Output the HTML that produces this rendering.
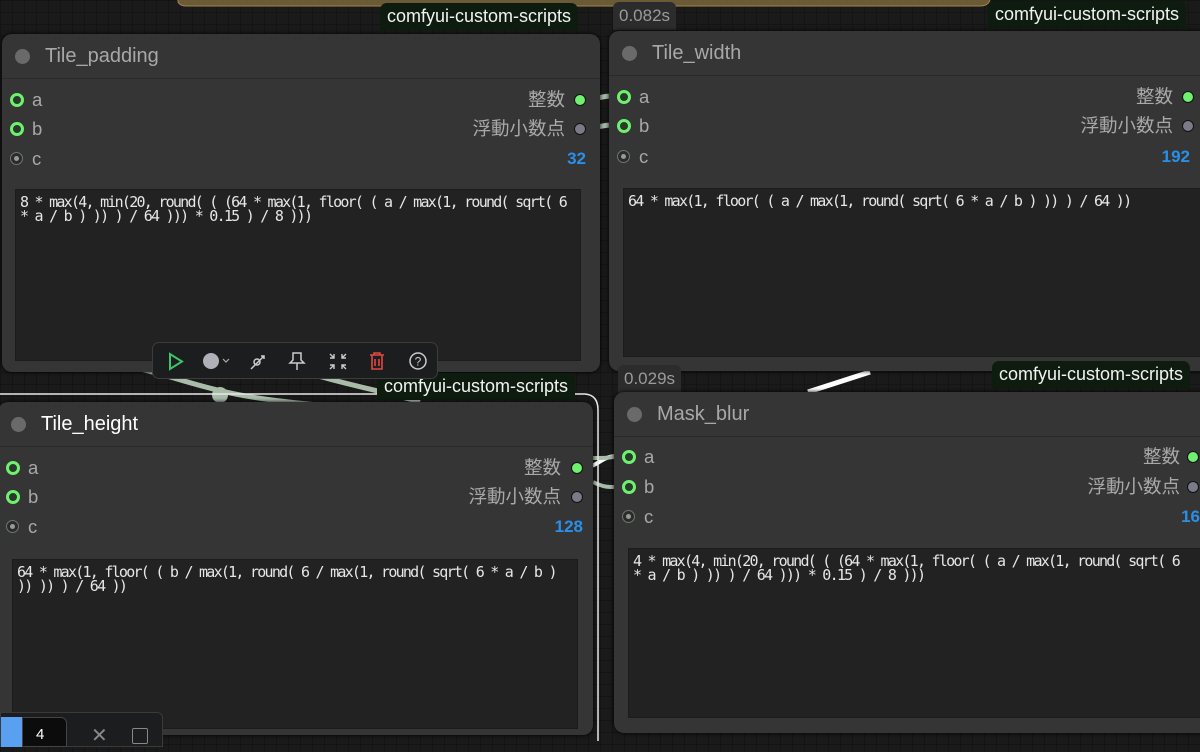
<!DOCTYPE html>
<html><head><meta charset="utf-8"><style>
*{box-sizing:border-box;margin:0;padding:0}
body{width:1200px;height:741px;overflow:hidden;position:relative;background:#1a1a1a;
background-image:linear-gradient(#141414 1px,transparent 1px),linear-gradient(90deg,#141414 1px,transparent 1px);background-size:12px 12px;
font-family:"Liberation Sans","Noto Sans CJK JP",sans-serif}
.abs{position:absolute}
.tag{position:absolute;background:#0e1c10;color:#f2f2f2;font-size:18px;padding:0 7px;height:27px;line-height:27px;border-radius:7px 7px 0 0;white-space:nowrap}
.badge{position:absolute;background:#2c2c2c;color:#9a9a9a;font-size:17px;padding:0 6px;height:28px;line-height:28px;border-radius:6px 6px 0 0}
.node{position:absolute;background:#353535;border-radius:10px;box-shadow:0 0 4px #000}
.title{position:absolute;left:0;right:0;top:0;height:45px;border-bottom:1px solid #2a2a2a;color:#a8a8a8;font-size:20px;line-height:45px}
.title .dot{position:absolute;left:13px;top:15px;width:15px;height:15px;border-radius:50%;background:#6a6a6a}
.title span{position:absolute;left:43px}
.row{position:absolute;left:0;right:0;height:26px;font-size:18.5px;color:#a8a8a8;line-height:26px}
.in{position:absolute;left:8px;top:6px;width:14px;height:14px;border-radius:50%;border:3.5px solid #6ff06f;background:#2a3a2a}
.inc{position:absolute;left:8px;top:6px;width:13px;height:13px;border-radius:50%;border:1.5px solid #6a7a6a;background:#2b2b2b}
.inc:after{content:"";position:absolute;left:2.5px;top:2.5px;width:5px;height:5px;border-radius:50%;background:#999}
.lab{position:absolute;left:30px}
.out{position:absolute;right:10px;top:7px;width:12px;height:12px;border-radius:50%;border:1px solid #111}
.olab{position:absolute;right:32px}
.num{position:absolute;right:14px;color:#2a8fe8;font-weight:bold;font-size:17px}
.ta{position:absolute;background:#222;border:1px solid #1c1c1c;color:#e6e6e6;font-family:"DejaVu Sans Mono","Liberation Mono",monospace;font-size:15px;line-height:14px;padding:5px 4px;white-space:pre;letter-spacing:-1.75px;overflow:hidden}
</style></head><body>
<svg class="abs" style="left:0;top:0" width="1200" height="741">
<path d="M178 0 L178 2 Q180 6 186 6 L980 6 Q988 6 990 0" fill="#6a5a36" stroke="#a08650" stroke-width="1"/>
<path d="M100 360 C200 380 200 395 320 405" stroke="#a9bba9" stroke-width="5" fill="none"/>
<path d="M270 360 C320 380 380 390 420 402" stroke="#a9bba9" stroke-width="5" fill="none"/>
<circle cx="220" cy="395" r="8" fill="#a9bba9"/>
<path d="M808 392 L870 372" stroke="#fff" stroke-width="5"/>
<path d="M586 99 C600 99 600 96 612 96" stroke="#a9bba9" stroke-width="5" fill="none"/>
<path d="M586 128 C600 128 600 125 612 125" stroke="#a9bba9" stroke-width="5" fill="none"/>
<path d="M583 467 C600 467 600 456 618 456" stroke="#fff" stroke-width="4" fill="none"/>
<path d="M593 458 C605 458 610 458 618 456" stroke="#a9bba9" stroke-width="4" fill="none"/>
<path d="M593 482 C605 488 610 487 618 487" stroke="#a9bba9" stroke-width="4" fill="none"/>
<path d="M0 394 L585 394 Q598 395 598 410 L598 741" stroke="#e8e8e8" stroke-width="1.5" fill="none"/>
</svg>

<div class="tag" style="left:380px;top:3px">comfyui-custom-scripts</div>
<div class="badge" style="left:613px;top:2px">0.082s</div>
<div class="tag" style="left:988px;top:1px">comfyui-custom-scripts</div>

<div class="node" style="left:2px;top:34px;width:598px;height:338px">
<div class="title"><div class="dot"></div><span>Tile_padding</span></div>
<div class="row" style="top:53px"><div class="in"></div><span class="lab">a</span><span class="olab" style="right:35px">整数</span><div class="out" style="background:#6ff06f;right:14px"></div></div>
<div class="row" style="top:82px"><div class="in"></div><span class="lab">b</span><span class="olab" style="right:35px">浮動小数点</span><div class="out" style="background:#7a7a88;right:14px"></div></div>
<div class="row" style="top:112px"><div class="inc"></div><span class="lab">c</span><span class="num">32</span></div>
<div class="ta" style="left:13px;top:155px;width:566px;height:172px">8 * max(4, min(20, round( ( (64 * max(1, floor( ( a / max(1, round( sqrt( 6
* a / b ) )) ) / 64 ))) * 0.15 ) / 8 )))</div>
</div>

<div class="node" style="left:609px;top:31px;width:600px;height:340px">
<div class="title"><div class="dot"></div><span>Tile_width</span></div>
<div class="row" style="top:53px"><div class="in"></div><span class="lab">a</span><span class="olab" style="right:36px">整数</span><div class="out" style="background:#6ff06f;right:15px"></div></div>
<div class="row" style="top:82px"><div class="in"></div><span class="lab">b</span><span class="olab" style="right:36px">浮動小数点</span><div class="out" style="background:#7a7a88;right:15px"></div></div>
<div class="row" style="top:113px"><div class="inc"></div><span class="lab">c</span><span class="num" style="right:19px">192</span></div>
<div class="ta" style="left:14px;top:157px;width:600px;height:169px">64 * max(1, floor( ( a / max(1, round( sqrt( 6 * a / b ) )) ) / 64 ))</div>
</div>

<div class="badge" style="left:618px;top:365px">0.029s</div>
<div class="tag" style="left:992px;top:361px">comfyui-custom-scripts</div>
<div class="tag" style="left:377px;top:373px">comfyui-custom-scripts</div>

<div class="node" style="left:-2px;top:402px;width:595px;height:333px">
<div class="title" style="color:#fff"><div class="dot"></div><span>Tile_height</span></div>
<div class="row" style="top:53px"><div class="in"></div><span class="lab">a</span><span class="olab">整数</span><div class="out" style="background:#6ff06f"></div></div>
<div class="row" style="top:82px"><div class="in"></div><span class="lab">b</span><span class="olab">浮動小数点</span><div class="out" style="background:#7a7a88"></div></div>
<div class="row" style="top:112px"><div class="inc"></div><span class="lab">c</span><span class="num" style="right:10px">128</span></div>
<div class="ta" style="left:14px;top:157px;width:566px;height:170px">64 * max(1, floor( ( b / max(1, round( 6 / max(1, round( sqrt( 6 * a / b )
)) )) ) / 64 ))</div>
</div>

<div class="node" style="left:614px;top:392px;width:600px;height:341px">
<div class="title"><div class="dot"></div><span>Mask_blur</span></div>
<div class="row" style="top:52px"><div class="in"></div><span class="lab">a</span><span class="olab" style="right:34px">整数</span><div class="out" style="background:#6ff06f;right:15px"></div></div>
<div class="row" style="top:82px"><div class="in"></div><span class="lab">b</span><span class="olab" style="right:34px">浮動小数点</span><div class="out" style="background:#7a7a88;right:15px"></div></div>
<div class="row" style="top:112px"><div class="inc"></div><span class="lab">c</span><span class="num" style="right:14px">16</span></div>
<div class="ta" style="left:14px;top:156px;width:600px;height:170px">4 * max(4, min(20, round( ( (64 * max(1, floor( ( a / max(1, round( sqrt( 6
* a / b ) )) ) / 64 ))) * 0.15 ) / 8 )))</div>
</div>

<div class="abs" style="left:152px;top:342px;width:286px;height:37px;background:#1c1d1f;border:1px solid #3c3c3c;border-radius:7px">
<svg width="286" height="37">
<path d="M17 11 L17 26 L29 18.5 Z" fill="none" stroke="#3ec46a" stroke-width="2"/>
<circle cx="58" cy="18" r="8" fill="#b0b0b8"/>
<path d="M70 16 l3 3 l3 -3" stroke="#aaa" fill="none" stroke-width="1.2"/>
<path d="M98 26 L104 20 M104 20 l7 -7 M108 13 h3 v3" stroke="#ccc" fill="none" stroke-width="1.5"/><circle cx="104" cy="19" r="3" fill="none" stroke="#ccc" stroke-width="1.5"/>
<path d="M140 10 h8 v7 l3 3 h-14 l3 -3z M144 20 v7" stroke="#ccc" fill="none" stroke-width="1.5"/>
<path d="M177 11 l4 4 M181 11 v4 h-4 M193 11 l-4 4 M189 11 v4 h4 M177 26 l4 -4 M177 22 h4 v4 M193 26 l-4 -4 M193 22 h-4 v4" stroke="#ccc" fill="none" stroke-width="1.4"/>
<path d="M217 12 h14 M221 12 v-2 h6 v2 M219 12 v14 h10 v-14 M222 16 v7 M226 16 v7" stroke="#e04a3e" fill="none" stroke-width="1.6"/>
<circle cx="265" cy="18" r="8" fill="none" stroke="#ccc" stroke-width="1.5"/>
<text x="265" y="22.5" font-size="12" fill="#ccc" text-anchor="middle" font-family="Liberation Sans">?</text>
</svg></div>

<div class="abs" style="left:0;top:712px;width:163px;height:35px;background:#1c1d1f;border:1px solid #3a3a3a;border-radius:0 6px 0 0">
<div class="abs" style="left:0;top:4px;width:21px;height:30px;background:#5aa0f0"></div>
<div class="abs" style="left:21px;top:4px;width:45px;height:30px;background:#0c0c0c;border:1px solid #444;border-radius:0 6px 0 0;color:#fff;font-size:15px;line-height:34px;padding-left:13px">4</div>
<div class="abs" style="left:90px;top:10px;color:#888;font-size:20px">✕</div>
<div class="abs" style="left:131px;top:15px;width:16px;height:16px;border:1.5px solid #888;border-radius:2px"></div>
</div>
</body></html>
